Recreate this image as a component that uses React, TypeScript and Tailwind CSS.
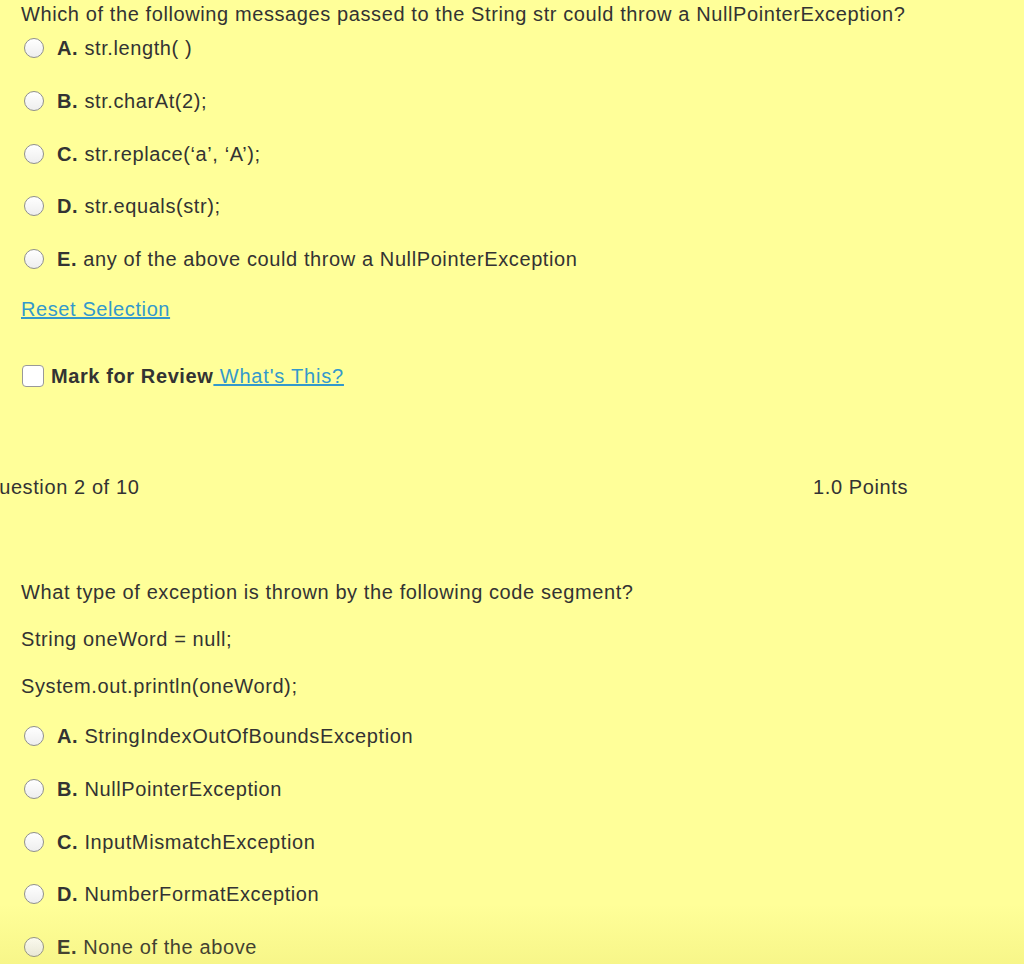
import React from "react";

const Radio = () => (
  <span className="inline-block w-[20px] h-[20px] rounded-full border-[1.5px] border-[#8f8f8f] bg-gradient-to-b from-white to-[#eeeeee] shrink-0" />
);

const Option = ({ letter, text }: { letter: string; text: string }) => (
  <div className="flex items-center h-6 pl-[24px]">
    <Radio />
    <span className="ml-[13px] whitespace-nowrap">
      <b className="font-bold">{letter}.</b> {text}
    </span>
  </div>
);

export default function App() {
  return (
    <div
      className="relative h-[964px] w-[1024px] overflow-hidden bg-[#ffff99] text-[#333333] text-[20px] tracking-[0.6px] leading-6"
      style={{ fontFamily: '"Liberation Sans", Arial, Helvetica, sans-serif' }}
    >
      <div className="pl-[21px] pt-[2px] whitespace-nowrap">
        Which of the following messages passed to the String str could throw a NullPointerException?
      </div>
      <div className="mt-[10px] flex flex-col gap-[28.75px]">
        <Option letter="A" text="str.length( )" />
        <Option letter="B" text="str.charAt(2);" />
        <Option letter="C" text="str.replace(‘a’, ‘A’);" />
        <Option letter="D" text="str.equals(str);" />
        <Option letter="E" text="any of the above could throw a NullPointerException" />
      </div>
      <div className="mt-[26px] pl-[21px]">
        <a href="#" className="text-[#3399cc] underline">Reset Selection</a>
      </div>
      <div className="mt-[43px] flex items-center h-6 pl-[22px]">
        <span className="inline-block w-[22px] h-[22px] rounded-[4px] border-[1.5px] border-[#999999] bg-white shrink-0" />
        <span className="ml-[7px] font-bold tracking-[0.6px]">Mark for Review</span>
        <a href="#" className="text-[#3399cc] underline whitespace-pre tracking-[0.8px]"> What's This?</a>
      </div>
      <div className="mt-[87px] ml-[-17px] w-[925px] flex justify-between h-6">
        <span>Question 2 of 10</span>
        <span>1.0 Points</span>
      </div>
      <div className="mt-[81px] pl-[21px]">What type of exception is thrown by the following code segment?</div>
      <div className="mt-[23px] pl-[21px]">String oneWord = null;</div>
      <div className="mt-[23px] pl-[21px]">System.out.println(oneWord);</div>
      <div className="mt-[26px] flex flex-col gap-[28.75px]">
        <Option letter="A" text="StringIndexOutOfBoundsException" />
        <Option letter="B" text="NullPointerException" />
        <Option letter="C" text="InputMismatchException" />
        <Option letter="D" text="NumberFormatException" />
        <Option letter="E" text="None of the above" />
      </div>
      <div className="pointer-events-none absolute left-0 right-0 bottom-0 h-[60px] bg-gradient-to-b from-[rgba(220,210,0,0)] to-[rgba(200,190,40,0.14)]" />
    </div>
  );
}
